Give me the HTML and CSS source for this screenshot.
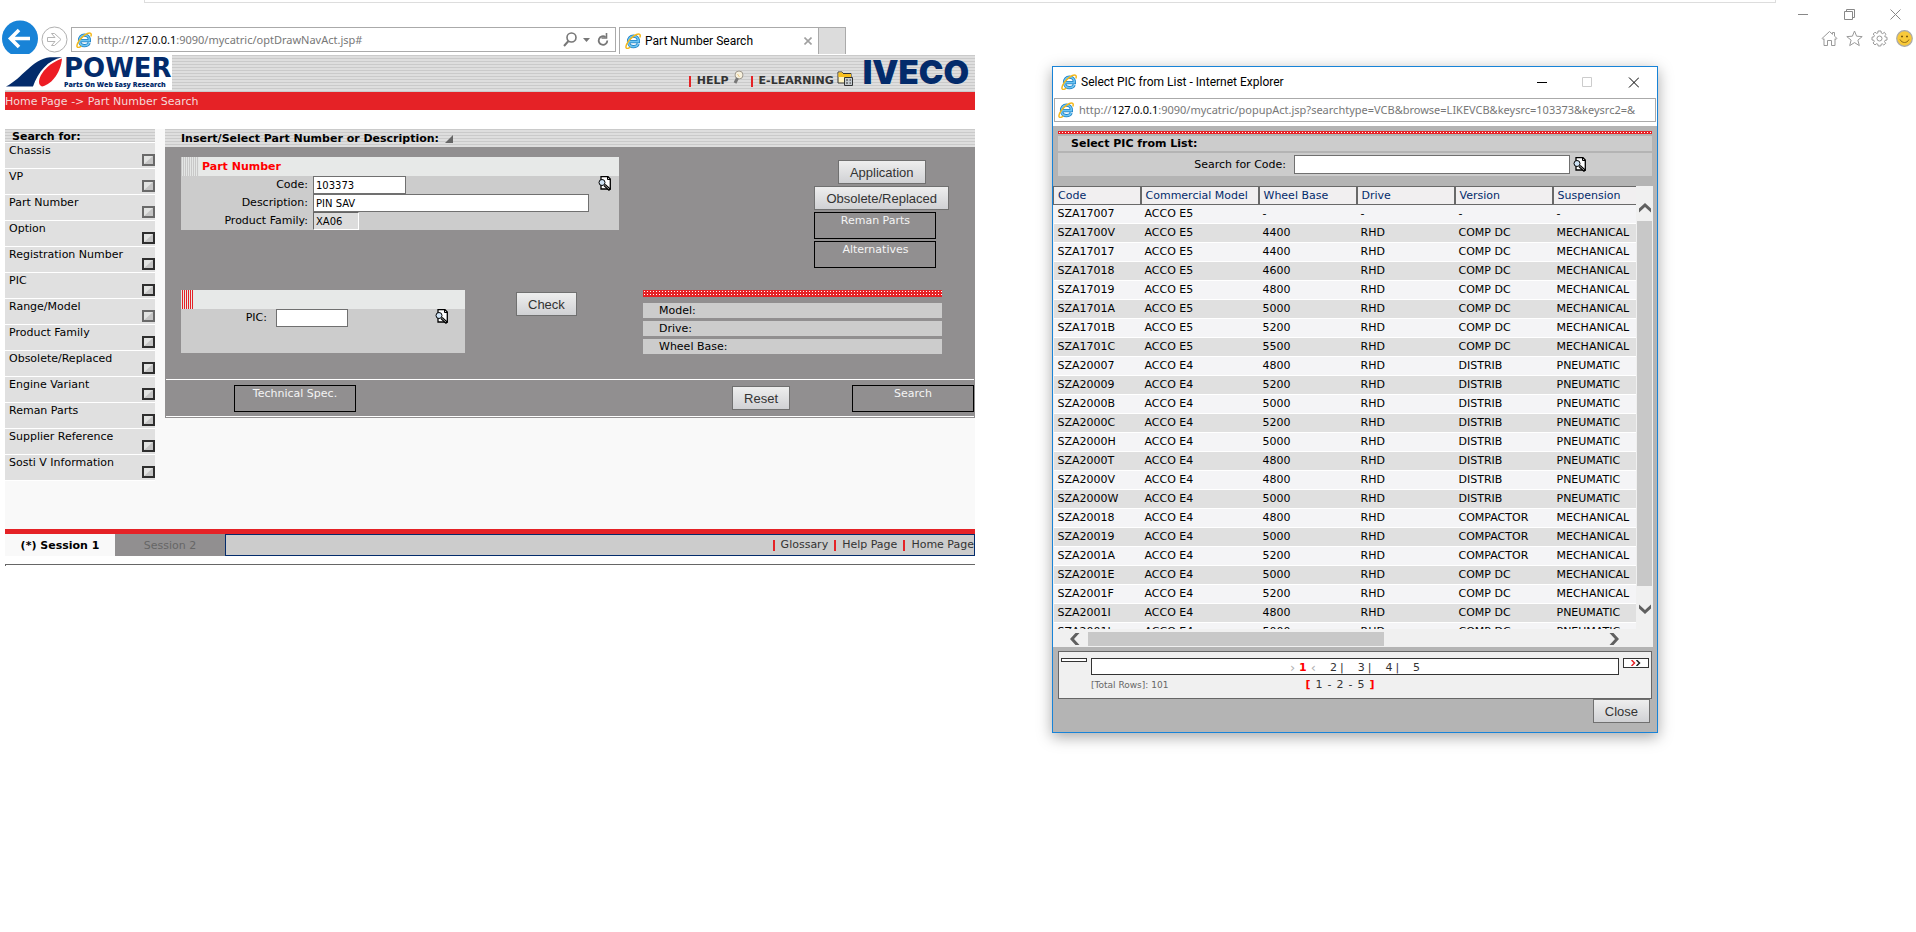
FILE: index.html
```html
<!DOCTYPE html>
<html lang="en">
<head>
    <meta charset="UTF-8">
    <meta name="viewport" content="width=device-width, initial-scale=1.0">
    <title>Part Number Search</title>
    <link rel="stylesheet" href="styles.css">
</head>
<body>

    <!-- Shared icons -->
    <svg class="sprite" aria-hidden="true">
        <symbol id="ie" viewBox="0 0 16 16">
            <path d="M3.6 8.6H13.4C13.5 5 11.4 3.1 8.500 3.100C5.500 3.100 3.500 5.400 3.500 8.500C3.500 11.700 5.600 13.700 8.500 13.700C10.700 13.700 12.400 12.700 13.200 10.900" fill="none" stroke="#1b7fc4" stroke-width="3.200"/>
            <path d="M3.600 8.600H13.400C13.500 5 11.400 3.100 8.500 3.100C5.500 3.100 3.500 5.400 3.500 8.500C3.500 11.700 5.600 13.700 8.500 13.700C10.700 13.700 12.400 12.700 13.200 10.900" fill="none" stroke="#6cc4f2" stroke-width="1.600"/>
            <path d="M14.800 4.500C15.600 2.500 15.300 .9 13.600 .9C11 .9 6.400 4.200 3.400 8.400C.8 12 .2 15.200 2 15.400C3 15.500 4.300 14.800 5.300 14" fill="none" stroke="#f4b81c" stroke-width="1.500"/>
        </symbol>
        <symbol id="lookup" viewBox="0 0 14 15">
            <path d="M3 .7H10L12.300 3V13H3Z" fill="#fff" stroke="#000" stroke-width="1.300"/>
            <path d="M9.500 1V3.500H12" fill="none" stroke="#000"/>
            <path d="M6.500 9L12 14" stroke="#000" stroke-width="3"/>
            <path d="M6.500 9L11 13" stroke="#999" stroke-width="1"/>
            <circle cx="4" cy="6.500" r="3" fill="#cfe3f5" stroke="#000"/>
        </symbol>
        <symbol id="box" viewBox="0 0 13 12">
            <path d="M1 1H12V11H1Z" fill="#e2e3e2"/>
            <path d="M12 1V11H1Z" fill="#c4c4c4"/>
            <path d="M1 1H12V11H1Z" fill="none" stroke="currentColor" stroke-width="2"/>
        </symbol>
        <symbol id="chevron" viewBox="0 0 12 10">
            <path d="M0 5.500L6 0L12 5.500V9.500L6 4L0 9.500Z" fill="#606060"/>
        </symbol>
    </svg>

    <div class="screen-edge"></div>

    <!-- Browser toolbar -->
    <header class="chrome">
        <div class="nav">
            <button class="icon-btn back" aria-label="Back">
                <svg width="36" height="34" viewBox="0 0 36 34"><circle cx="18" cy="18.500" r="18" fill="#1883d7"/><path d="M8.500 18.500H28M17 10L8.500 18.500L17 27" fill="none" stroke="#fff" stroke-width="3.600"/></svg>
            </button>
            <button class="icon-btn forward" aria-label="Forward">
                <svg width="27" height="27" viewBox="0 0 27 27"><circle cx="13.500" cy="13.500" r="12.500" fill="#fff" stroke="#b0b0b0"/><path d="M6.500 11.500H14L10.500 7.500H13.500L20 13.500L13.500 19.500H10.500L14 15.500H6.500Z" fill="#fff" stroke="#b4b4b4"/></svg>
            </button>
            <div class="address">
                <svg width="16" height="16"><use href="#ie"/></svg>
                <span class="url">http://<b>127.0.0.1</b>:9090/mycatric/optDrawNavAct.jsp#</span>
                <svg width="46" height="16" viewBox="0 0 46 16">
                    <circle cx="8.500" cy="5.500" r="4.500" fill="none" stroke="#777" stroke-width="1.600"/>
                    <path d="M5.500 9L1 14" stroke="#777" stroke-width="2"/>
                    <path d="M20 6H27L23.500 10Z" fill="#777"/>
                    <path d="M42.500 5A4.300 4.300 0 1 0 44.300 8.500" fill="none" stroke="#777" stroke-width="1.800"/>
                    <path d="M43.500 1V6H38.500" fill="none" stroke="#777" stroke-width="1.600"/>
                </svg>
            </div>
            <div class="tab">
                <svg width="16" height="16"><use href="#ie"/></svg>
                <span class="tab-title">Part Number Search</span>
                <svg width="8" height="8" viewBox="0 0 8 8"><path d="M.5 .5L7.500 7.500M7.500 .5L.5 7.500" stroke="#a0a0a0" stroke-width="1.600"/></svg>
            </div>
            <button class="new-tab" aria-label="New tab"></button>
        </div>
        <div class="window-tools">
            <div class="window-buttons">
                <svg width="11" height="11" viewBox="0 0 11 11"><path d="M0 5.500H10" stroke="#888"/></svg>
                <svg width="11" height="11" viewBox="0 0 11 11"><path d="M.5 2.500H8.500V10.500H.5ZM2.500 2.500V.5H10.500V8.500H8.500" fill="none" stroke="#888"/></svg>
                <svg width="11" height="11" viewBox="0 0 11 11"><path d="M.5 .5L10.500 10.500M10.500 .5L.5 10.500" stroke="#888"/></svg>
            </div>
            <div class="tool-icons">
                <svg width="17" height="17" viewBox="0 0 17 17"><path d="M1 8.500L8.500 1.500L11.500 4.300V2.500H13.500V6.200L16 8.500L15 9.500L14 8.700V15.500H10.500V10.500H6.500V15.500H3V8.700L2 9.500Z" fill="none" stroke="#999"/></svg>
                <svg width="17" height="17" viewBox="0 0 17 17"><path d="M8.500 1L10.600 6.200L16.200 6.600L11.900 10.100L13.300 15.600L8.500 12.600L3.700 15.600L5.100 10.100L.8 6.600L6.400 6.200Z" fill="none" stroke="#999"/></svg>
                <svg width="17" height="17" viewBox="0 0 17 17"><circle cx="8.500" cy="8.500" r="2.500" fill="none" stroke="#999"/><path d="M7 1H10L10.300 3L11.700 3.600L13.400 2.300L15 4.500L13.700 5.800L14.200 7L16 7.300V10L14 10.400L13.500 11.600L14.700 13.300L12.800 15L11.300 13.800L10.200 14.200L9.800 16H7.200L6.800 14.200L5.600 13.700L4 14.900L2 13L3.300 11.400L2.900 10.300L1 10V7.200L2.900 6.800L3.400 5.500L2.200 4L4 2.200L5.700 3.400L6.800 3Z" fill="none" stroke="#999"/></svg>
                <svg width="17" height="17" viewBox="0 0 17 17"><circle cx="8.500" cy="8.500" r="7.800" fill="#f8c93a" stroke="#aaa" stroke-width="1.200"/><path d="M5 6.500H7M10 6.500H12" stroke="#7a5a10" stroke-width="1.600"/><path d="M4 9.500C6 13.500 11 13.500 13 9.500" fill="none" stroke="#8d6a15"/></svg>
            </div>
        </div>
    </header>

    <div class="desktop">

        <!-- Catalogue page -->
        <main class="app">
            <div class="banner">
                <div class="logo">
                    <svg width="59" height="35" viewBox="0 0 59 35">
                        <path d="M1 31.500C17 24 27 4 45 2.300H57C43 5 33 17 28 31.500Z" fill="#032b6b"/>
                        <path d="M57 3.500C44 8 34 19 34 27C34 29 35 31 37 31.500C48 29 56 16 57 3.500Z" fill="#ed1c24"/>
                    </svg>
                    <div class="logo-text">
                        <strong>POWER</strong>
                        <small>Parts On Web Easy Research</small>
                    </div>
                </div>
                <div class="banner-links">
                    <a href="#">HELP</a>
                    <svg width="12" height="16" viewBox="0 0 12 16"><circle cx="7" cy="5" r="4" fill="#f7f0dc" stroke="#a09a90"/><path d="M5.500 8L3 13" stroke="#777" stroke-width="3"/><path d="M5.500 4L7.500 7" stroke="#e8c98a"/></svg>
                    <a href="#">E-LEARNING</a>
                    <svg width="16" height="16" viewBox="0 0 16 16"><path d="M1 2H5L6 3.500H14V13H1Z" fill="#fff3c0" stroke="#333"/><path d="M1.500 2.500H5L6 4H14V7H1.500Z" fill="#f8bf1e"/><path d="M7.500 7.500H15.500V15.500H7.500Z" fill="#c5cbd0" stroke="#333"/><path d="M9 10H11M9 13H11M12.500 10H14M12.500 13H14" stroke="#333"/></svg>
                </div>
                <div class="brand">IVECO</div>
            </div>
            <nav class="crumbs">
                <a href="#">Home Page</a> <span>-&gt;</span> <a href="#">Part Number Search</a>
            </nav>

            <div class="workspace">
                <aside class="sidebar">
                    <h2>Search for:</h2>
                    <a class="dim" href="#">Chassis <svg width="13" height="12"><use href="#box"/></svg></a>
                    <a class="dim" href="#">VP <svg width="13" height="12"><use href="#box"/></svg></a>
                    <a class="dim" href="#">Part Number <svg width="13" height="12"><use href="#box"/></svg></a>
                    <a href="#">Option <svg width="13" height="12"><use href="#box"/></svg></a>
                    <a href="#">Registration Number <svg width="13" height="12"><use href="#box"/></svg></a>
                    <a href="#">PIC <svg width="13" height="12"><use href="#box"/></svg></a>
                    <a class="dim" href="#">Range/Model <svg width="13" height="12"><use href="#box"/></svg></a>
                    <a href="#">Product Family <svg width="13" height="12"><use href="#box"/></svg></a>
                    <a href="#">Obsolete/Replaced <svg width="13" height="12"><use href="#box"/></svg></a>
                    <a href="#">Engine Variant <svg width="13" height="12"><use href="#box"/></svg></a>
                    <a href="#">Reman Parts <svg width="13" height="12"><use href="#box"/></svg></a>
                    <a href="#">Supplier Reference <svg width="13" height="12"><use href="#box"/></svg></a>
                    <a href="#">Sosti V Information <svg width="13" height="12"><use href="#box"/></svg></a>
                </aside>

                <form class="panel">
                    <h1>Insert/Select Part Number or Description:
                        <svg width="8" height="8" viewBox="0 0 8 8"><path d="M8 0V8H0Z" fill="#666"/></svg>
                    </h1>

                    <div class="panel-top">
                        <fieldset class="part">
                            <div class="box-head">Part Number</div>
                            <div class="field">
                                <label for="code">Code:</label>
                                <input class="short" id="code" type="text" value="103373">
                                <button type="button" class="icon-btn pick" aria-label="Find part"><svg width="14" height="15"><use href="#lookup"/></svg></button>
                            </div>
                            <div class="field">
                                <label for="description">Description:</label>
                                <input class="long" id="description" type="text" value="PIN SAV">
                            </div>
                            <div class="field">
                                <label for="family">Product Family:</label>
                                <input class="locked" id="family" type="text" value="XA06" readonly>
                            </div>
                        </fieldset>
                        <div class="actions">
                            <button type="button" class="btn center">Application</button>
                            <button type="button" class="btn">Obsolete/Replaced</button>
                            <button type="button" class="flat">Reman Parts</button>
                            <button type="button" class="flat">Alternatives</button>
                        </div>
                    </div>

                    <div class="panel-mid">
                        <fieldset class="pic">
                            <div class="box-head red-bars"></div>
                            <div class="field">
                                <label for="pic">PIC:</label>
                                <input id="pic" type="text">
                                <button type="button" class="icon-btn pick" aria-label="Find PIC"><svg width="14" height="15"><use href="#lookup"/></svg></button>
                            </div>
                        </fieldset>
                        <button type="button" class="btn">Check</button>
                        <div class="details">
                            <div class="dots"></div>
                            <p>Model:</p>
                            <p>Drive:</p>
                            <p>Wheel Base:</p>
                        </div>
                    </div>

                    <div class="panel-foot">
                        <button type="button" class="flat">Technical Spec.</button>
                        <button type="reset" class="btn">Reset</button>
                        <button type="submit" class="flat">Search</button>
                    </div>
                </form>
            </div>

            <footer class="sessions">
                <a class="session active" href="#">(*) Session 1</a>
                <a class="session" href="#">Session 2</a>
                <div class="foot-links">
                    <a href="#">Glossary</a>
                    <a href="#">Help Page</a>
                    <a href="#">Home Page</a>
                </div>
            </footer>
            <hr>
        </main>

        <!-- Popup window -->
        <section class="popup">
            <div class="popup-title">
                <svg width="16" height="16"><use href="#ie"/></svg>
                <span>Select PIC from List - Internet Explorer</span>
                <svg width="102" height="11" viewBox="0 0 102 11"><path d="M0 5.500H10M92 .5L102 10.500M102 .5L92 10.500" stroke="#000"/><path d="M45.500 .5H54.500V9.500H45.500Z" fill="none" stroke="#ccc"/></svg>
            </div>
            <div class="address popup-address">
                <svg width="16" height="16"><use href="#ie"/></svg>
                <span class="url">http://<b>127.0.0.1</b>:9090/mycatric/popupAct.jsp?searchtype=VCB&amp;browse=LIKEVCB&amp;keysrc=103373&amp;keysrc2=&amp;</span>
            </div>

            <div class="popup-body">
                <div class="dots thin"></div>
                <h2>Select PIC from List:</h2>
                <div class="code-search">
                    <label for="search-code">Search for Code:</label>
                    <input id="search-code" type="text">
                    <button type="button" class="icon-btn" aria-label="Search code"><svg width="14" height="15"><use href="#lookup"/></svg></button>
                </div>

                <div class="list">
                    <div class="list-view">
                        <table>
                            <thead>
                                <tr><th class="c-code">Code</th><th class="c-model">Commercial Model</th><th class="c-mid">Wheel Base</th><th class="c-mid">Drive</th><th class="c-mid">Version</th><th>Suspension</th></tr>
                            </thead>
                            <tbody>
                                <tr><td>SZA17007</td><td>ACCO E5</td><td>-</td><td>-</td><td>-</td><td>-</td></tr>
                                <tr><td>SZA1700V</td><td>ACCO E5</td><td>4400</td><td>RHD</td><td>COMP DC</td><td>MECHANICAL</td></tr>
                                <tr><td>SZA17017</td><td>ACCO E5</td><td>4400</td><td>RHD</td><td>COMP DC</td><td>MECHANICAL</td></tr>
                                <tr><td>SZA17018</td><td>ACCO E5</td><td>4600</td><td>RHD</td><td>COMP DC</td><td>MECHANICAL</td></tr>
                                <tr><td>SZA17019</td><td>ACCO E5</td><td>4800</td><td>RHD</td><td>COMP DC</td><td>MECHANICAL</td></tr>
                                <tr><td>SZA1701A</td><td>ACCO E5</td><td>5000</td><td>RHD</td><td>COMP DC</td><td>MECHANICAL</td></tr>
                                <tr><td>SZA1701B</td><td>ACCO E5</td><td>5200</td><td>RHD</td><td>COMP DC</td><td>MECHANICAL</td></tr>
                                <tr><td>SZA1701C</td><td>ACCO E5</td><td>5500</td><td>RHD</td><td>COMP DC</td><td>MECHANICAL</td></tr>
                                <tr><td>SZA20007</td><td>ACCO E4</td><td>4800</td><td>RHD</td><td>DISTRIB</td><td>PNEUMATIC</td></tr>
                                <tr><td>SZA20009</td><td>ACCO E4</td><td>5200</td><td>RHD</td><td>DISTRIB</td><td>PNEUMATIC</td></tr>
                                <tr><td>SZA2000B</td><td>ACCO E4</td><td>5000</td><td>RHD</td><td>DISTRIB</td><td>PNEUMATIC</td></tr>
                                <tr><td>SZA2000C</td><td>ACCO E4</td><td>5200</td><td>RHD</td><td>DISTRIB</td><td>PNEUMATIC</td></tr>
                                <tr><td>SZA2000H</td><td>ACCO E4</td><td>5000</td><td>RHD</td><td>DISTRIB</td><td>PNEUMATIC</td></tr>
                                <tr><td>SZA2000T</td><td>ACCO E4</td><td>4800</td><td>RHD</td><td>DISTRIB</td><td>PNEUMATIC</td></tr>
                                <tr><td>SZA2000V</td><td>ACCO E4</td><td>4800</td><td>RHD</td><td>DISTRIB</td><td>PNEUMATIC</td></tr>
                                <tr><td>SZA2000W</td><td>ACCO E4</td><td>5000</td><td>RHD</td><td>DISTRIB</td><td>PNEUMATIC</td></tr>
                                <tr><td>SZA20018</td><td>ACCO E4</td><td>4800</td><td>RHD</td><td>COMPACTOR</td><td>MECHANICAL</td></tr>
                                <tr><td>SZA20019</td><td>ACCO E4</td><td>5000</td><td>RHD</td><td>COMPACTOR</td><td>MECHANICAL</td></tr>
                                <tr><td>SZA2001A</td><td>ACCO E4</td><td>5200</td><td>RHD</td><td>COMPACTOR</td><td>MECHANICAL</td></tr>
                                <tr><td>SZA2001E</td><td>ACCO E4</td><td>5000</td><td>RHD</td><td>COMP DC</td><td>MECHANICAL</td></tr>
                                <tr><td>SZA2001F</td><td>ACCO E4</td><td>5200</td><td>RHD</td><td>COMP DC</td><td>MECHANICAL</td></tr>
                                <tr><td>SZA2001I</td><td>ACCO E4</td><td>4800</td><td>RHD</td><td>COMP DC</td><td>PNEUMATIC</td></tr>
                                <tr><td>SZA2001J</td><td>ACCO E4</td><td>5000</td><td>RHD</td><td>COMP DC</td><td>PNEUMATIC</td></tr>
                            </tbody>
                        </table>
                    </div>
                    <div class="scroll-y">
                        <svg width="12" height="10"><use href="#chevron"/></svg>
                        <div class="thumb"></div>
                        <svg class="down" width="12" height="10"><use href="#chevron"/></svg>
                    </div>
                    <div class="scroll-x">
                        <svg class="left" width="12" height="10"><use href="#chevron"/></svg>
                        <div class="thumb"></div>
                        <svg class="right" width="12" height="10"><use href="#chevron"/></svg>
                    </div>
                </div>

                <div class="pager">
                    <button type="button" class="step prev" aria-label="Previous pages"></button>
                    <div class="pages">
                        <div class="page-list"><i>›</i><b>1</b><i>‹</i><a href="#">2</a><a href="#">3</a><a href="#">4</a><a href="#">5</a></div>
                        <div class="page-info">
                            <span>[Total Rows]: 101</span>
                            <p><b>[</b><a href="#">1</a>-<a href="#">2</a>-<a href="#">5</a><b>]</b></p>
                        </div>
                    </div>
                    <button type="button" class="step" aria-label="Next pages"><svg width="10" height="6" viewBox="0 0 10 6"><path d="M.5 0L3.500 3L.5 6" fill="none" stroke="#e52226" stroke-width="1.500"/><path d="M5.500 0L8.500 3L5.500 6" fill="none" stroke="#222" stroke-width="1.500"/></svg></button>
                </div>
                <div class="popup-actions">
                    <button type="button" class="btn">Close</button>
                </div>
            </div>
        </section>
    </div>

</body>
</html>
```
FILE: styles.css
```css
:root {
    --red: #e52226;
    --navy: #032b6b;
    --panel: #918f90;
    --box: #cccccc;
    --light: #f9f9f9;
    --stripes: repeating-linear-gradient(#cacaca 0 1px, #dedede 1px 3px);
    --page-font: "DejaVu Sans", Verdana, sans-serif;
    --ui-font: Roboto, "Noto Sans", sans-serif;
}

* {
    margin: 0;
    padding: 0;
    box-sizing: border-box;
}

body {
    background-color: #ffffff;
    color: #000000;
    font-family: var(--page-font);
    font-size: 11px;
    line-height: 14px;
}

a {
    color: inherit;
    text-decoration: none;
}

svg {
    display: block;
    flex: none;
}

fieldset {
    border: none;
    min-width: 0;
}

input {
    height: 18px;
    padding: 0 2px;
    border: 1px solid #707070;
    background-color: #ffffff;
    font-family: var(--page-font);
    font-size: 10px;
}

.sprite {
    position: absolute;
    width: 0;
    height: 0;
}

.icon-btn {
    border: none;
    background: none;
}

/* Browser toolbar */
.screen-edge {
    height: 3px;
    margin: 0 140px 0 144px;
    border: 1px solid #dddddd;
    border-top: none;
}

.chrome {
    display: flex;
    justify-content: space-between;
    align-items: flex-end;
    height: 51px;
    font-family: var(--ui-font);
    font-size: 12px;
}

.nav {
    display: flex;
    align-items: flex-end;
    width: 846px;
    padding-left: 2px;
}

.forward {
    padding: 0 2px 1px 3px;
}

.address {
    display: flex;
    align-items: center;
    gap: 5px;
    flex: 1;
    height: 25px;
    margin: 0 3px 2px 1px;
    padding: 0 6px 0 4px;
    border: 1px solid #aaaaaa;
    background-color: #ffffff;
    color: #777777;
}

.url {
    flex: 1;
    overflow: hidden;
    font-family: "Noto Sans", sans-serif;
    font-size: 11px;
    line-height: 20px;
    white-space: nowrap;
}

.url b {
    color: #000000;
    font-weight: normal;
}

.tab {
    display: flex;
    align-items: center;
    gap: 4px;
    width: 200px;
    height: 27px;
    padding: 0 6px 0 5px;
    border: 1px solid #aaaaaa;
    border-bottom: none;
}

.tab-title {
    flex: 1;
}

.new-tab {
    width: 27px;
    height: 27px;
    border: 1px solid #aaaaaa;
    border-width: 1px 1px 0 0;
    background-color: #dcdcdc;
}

.window-tools {
    align-self: flex-start;
    padding: 6px 3px 0 0;
}

.window-buttons {
    display: flex;
    justify-content: flex-end;
    gap: 35px;
    padding-right: 12px;
}

.tool-icons {
    display: flex;
    justify-content: flex-end;
    gap: 8px;
    margin-top: 10px;
}

/* Desktop */
.desktop {
    display: grid;
    grid-template-columns: 970fr 606fr 181fr;
    align-items: start;
    column-gap: 77px;
    padding: 1px 0 24px 5px;
}

.app,
.popup {
    min-width: 0;
}

/* Banner */
.banner {
    display: flex;
    align-items: flex-start;
    height: 37px;
    background: var(--stripes);
}

.logo {
    display: flex;
    width: 167px;
    height: 35px;
    background-color: #ffffff;
    color: var(--navy);
}

.logo-text strong {
    display: block;
    font-size: 26px;
    line-height: 26px;
}

.logo-text small {
    display: block;
    font-family: "Open Sans", sans-serif;
    font-size: 7px;
    font-weight: 800;
    line-height: 8px;
    white-space: nowrap;
}

.banner-links {
    display: flex;
    gap: 3px;
    align-items: center;
    margin-left: auto;
    padding-top: 15px;
    color: #333333;
    font-weight: bold;
}

.banner-links a,
.foot-links a {
    display: flex;
    align-items: center;
    gap: 6px;
}

.banner-links a {
    padding-top: 1px;
}

.banner-links a::before,
.foot-links a::before {
    content: "";
    width: 2px;
    height: 11px;
    background-color: var(--red);
}

.banner-links svg {
    margin-bottom: 5px;
}

.banner-links svg + a {
    margin-left: 4px;
}

.brand {
    margin: 0 6px 0 10px;
    color: var(--navy);
    font-family: Inter, sans-serif;
    font-size: 33px;
    font-weight: 900;
    line-height: 35px;
}

.crumbs {
    padding: 3px 0 1px;
    background-color: var(--red);
    color: #f4d9d9;
}

/* Sidebar */
.workspace {
    display: flex;
    align-items: flex-start;
    gap: 10px;
    margin-top: 19px;
    padding-bottom: 48px;
    background-color: var(--light);
}

.sidebar {
    width: 150px;
}

.sidebar h2 {
    height: 14px;
    padding-left: 7px;
    border-bottom: 1px solid #ffffff;
    background: var(--stripes);
    font-size: 11px;
    line-height: 15px;
}

.sidebar a {
    display: flex;
    justify-content: space-between;
    height: 26px;
    padding-left: 4px;
    border-bottom: 1px solid #ffffff;
    background-color: #e0e0e0;
    line-height: 16px;
}

.sidebar svg {
    align-self: flex-end;
    margin-bottom: 2px;
    color: #2e2e2e;
}

.sidebar .dim svg {
    color: #696969;
}

/* Search panel */
.panel {
    flex: 1;
    padding-bottom: 1px;
    background-color: var(--panel);
}

.panel h1 {
    display: flex;
    align-items: center;
    gap: 6px;
    height: 18px;
    padding: 1px 0 0 16px;
    background: var(--stripes);
    font-size: 11px;
}

.panel-top {
    display: flex;
    justify-content: space-between;
    align-items: flex-start;
    padding: 10px 26px 22px 16px;
}

.part {
    width: 57%;
    background-color: var(--box);
}

.box-head {
    height: 19px;
    padding-left: 21px;
    background: repeating-linear-gradient(90deg, #c8c8c8 0 1px, #e4e6e5 1px 2px) no-repeat 0 0 / 18px 100%, #e7e9e8;
    color: #ff0000;
    font-weight: bold;
    line-height: 20px;
}

.red-bars {
    background: repeating-linear-gradient(90deg, #e7e9e8 0 1px, var(--red) 1px 2px) no-repeat 0 0 / 12px 100%, #e7e9e8;
}

.field {
    display: flex;
    align-items: center;
    gap: 5px;
    height: 18px;
}

.field label {
    width: 127px;
    line-height: 18px;
    text-align: right;
}

.short {
    width: 93px;
}

.long {
    width: 276px;
}

.locked {
    width: 46px;
    border: 1px solid;
    border-color: #666666 #ffffff #ffffff #666666;
    background-color: #dcdcdc;
}

.pick {
    align-self: flex-start;
    margin-left: auto;
    padding-right: 7px;
}

.actions {
    display: flex;
    flex-direction: column;
    align-items: flex-start;
    gap: 2px;
    padding-top: 3px;
}

.btn {
    height: 24px;
    padding: 0 11px;
    border: 1px solid #707070;
    background: linear-gradient(#eeeeee, #d0d1d4);
    color: #333333;
    font-family: "Liberation Sans", Arial, sans-serif;
    font-size: 13px;
}

.center {
    align-self: center;
}

.flat {
    display: flex;
    justify-content: center;
    width: 122px;
    height: 27px;
    border: 1px solid #000000;
    background: none;
    color: #f4f4f4;
    font-family: var(--page-font);
    font-size: 11px;
    line-height: 15px;
}

.panel-mid {
    display: flex;
    align-items: flex-start;
    gap: 51px;
    padding: 0 33px 25px 16px;
}

.pic {
    width: 284px;
    min-height: 63px;
    background-color: var(--box);
}

.pic .field {
    gap: 9px;
}

.pic label {
    width: 86px;
}

.pic input {
    width: 72px;
}

.pic .pick {
    padding-right: 16px;
}

.panel-mid .btn {
    margin-top: 2px;
}

.details {
    display: grid;
    gap: 3px;
    width: 299px;
    margin-left: auto;
}

.details p {
    height: 15px;
    padding-left: 16px;
    background-color: var(--box);
    line-height: 16px;
}

.dots {
    height: 7px;
    margin-bottom: 3px;
    background: radial-gradient(#ffffff 30%, transparent 40%) 0 0 / 3px 3px, var(--red);
}

.panel-foot {
    display: flex;
    align-items: center;
    gap: 62px;
    height: 38px;
    margin: 0 1px;
    padding-left: 68px;
    border: solid #ffffff;
    border-width: 1px 0;
}

.panel-foot .btn {
    margin-left: auto;
}

/* Sessions */
.sessions {
    display: flex;
    height: 27px;
    border-top: 5px solid var(--red);
    line-height: 24px;
}

.session {
    width: 110px;
    height: 22px;
    background-color: var(--panel);
    color: #666666;
    text-align: center;
}

.session.active {
    background-color: var(--light);
    color: #000000;
    font-weight: bold;
}

.foot-links {
    display: flex;
    justify-content: flex-end;
    align-items: center;
    gap: 6px;
    flex: 1;
    border: 1px solid var(--navy);
    background-color: var(--box);
    color: #333333;
}

hr {
    margin-top: 8px;
    border: solid #666666;
    border-width: 1px 0 0 1px;
    height: 2px;
}

/* Popup window */
.popup {
    margin-top: 11px;
    border: 1px solid #1883d7;
    background-color: #ffffff;
    box-shadow: 0 4px 14px rgba(0, 0, 0, 0.35);
}

.popup-title {
    display: flex;
    align-items: center;
    gap: 4px;
    height: 31px;
    padding: 0 18px 1px 8px;
    font-family: var(--ui-font);
    font-size: 12px;
}

.popup-title span {
    flex: 1;
}

.popup-address {
    height: 24px;
    margin: 0 1px 4px;
    padding: 0 4px 0 3px;
}

.popup-body {
    padding: 5px 4px 9px 0;
    background-color: #b4b4b4;
}

.popup-body .thin {
    height: 3px;
    margin: 0 1px 2px 5px;
}

.popup-body h2 {
    height: 15px;
    margin: 0 1px 2px 5px;
    padding-left: 13px;
    background-color: var(--box);
    font-size: 11px;
    line-height: 16px;
}

.code-search {
    display: flex;
    align-items: center;
    gap: 3px;
    height: 23px;
    margin: 0 1px 10px 5px;
    padding-right: 65px;
    background-color: var(--box);
}

.code-search label {
    margin: 0 5px 0 auto;
    line-height: 16px;
}

.code-search input {
    width: 276px;
    height: 19px;
}

.list {
    display: grid;
    grid-template-columns: minmax(0, 1fr) 17px;
    background-color: #f0f0f0;
}

.list-view {
    height: 443px;
    overflow: hidden;
}

table {
    width: 100%;
    border-collapse: collapse;
    table-layout: fixed;
}

th,
td {
    height: 19px;
    padding: 0 4px;
    text-align: left;
    white-space: nowrap;
}

th {
    height: 18px;
    border: solid #696969;
    border-width: 1px 0 1px 2px;
    background-color: #f1eff0;
    color: var(--navy);
    font-weight: normal;
}

.c-code {
    width: 87px;
    border-left-width: 1px;
}

.c-model {
    width: 118px;
}

.c-mid {
    width: 98px;
}

td {
    border-bottom: 1px solid #ffffff;
    background-color: #f4f4f6;
}

tbody tr:nth-child(even) td {
    background-color: #e0e0e0;
}

.scroll-y {
    display: flex;
    flex-direction: column;
    align-items: center;
    gap: 8px;
    padding: 17px 1px;
}

.scroll-y .thumb {
    width: 100%;
    flex: 0 1 365px;
    background-color: #c8c8c8;
}

.scroll-y .down {
    margin-top: 10px;
    transform: rotate(180deg);
}

.scroll-x {
    display: flex;
    align-items: center;
    gap: 7px;
    grid-column: 1 / -1;
    height: 16px;
    padding: 0 33px 0 16px;
}

.scroll-x .thumb {
    width: 296px;
    height: 14px;
    background-color: #c8c8c8;
}

.scroll-x .left {
    transform: rotate(-90deg);
}

.scroll-x .right {
    margin-left: auto;
    transform: rotate(90deg);
}

/* Pager */
.pager {
    display: flex;
    align-items: flex-start;
    gap: 4px;
    height: 48px;
    margin: 4px 1px 0 5px;
    padding: 6px 2px 0;
    border: 1px solid #666666;
    background-color: #f0f0f0;
    color: #333333;
}

.step {
    display: flex;
    justify-content: center;
    align-items: center;
    width: 26px;
    height: 10px;
    border: 1px solid #333333;
    background-color: #ffffff;
}

.prev {
    height: 4px;
}

.pages {
    flex: 1;
}

.page-list {
    display: flex;
    justify-content: center;
    gap: 4px;
    height: 17px;
    border: 1px solid #333333;
    background-color: #ffffff;
    line-height: 17px;
}

.page-list a {
    padding-left: 10px;
}

.page-list a:not(:last-child)::after {
    content: "|";
    padding-left: 3px;
}

.page-list i {
    color: #b0b0b0;
    font-size: 13px;
    font-style: normal;
}

.page-list b,
.page-info b {
    color: #ff0000;
}

.page-info {
    display: grid;
    grid-template-columns: 1fr auto 1fr;
    padding: 3px 30px 0 0;
}

.page-info span {
    color: #666666;
    font-size: 9px;
}

.page-info p {
    display: flex;
    gap: 5px;
}

.popup-actions {
    display: flex;
    justify-content: flex-end;
    padding-right: 3px;
}
```
